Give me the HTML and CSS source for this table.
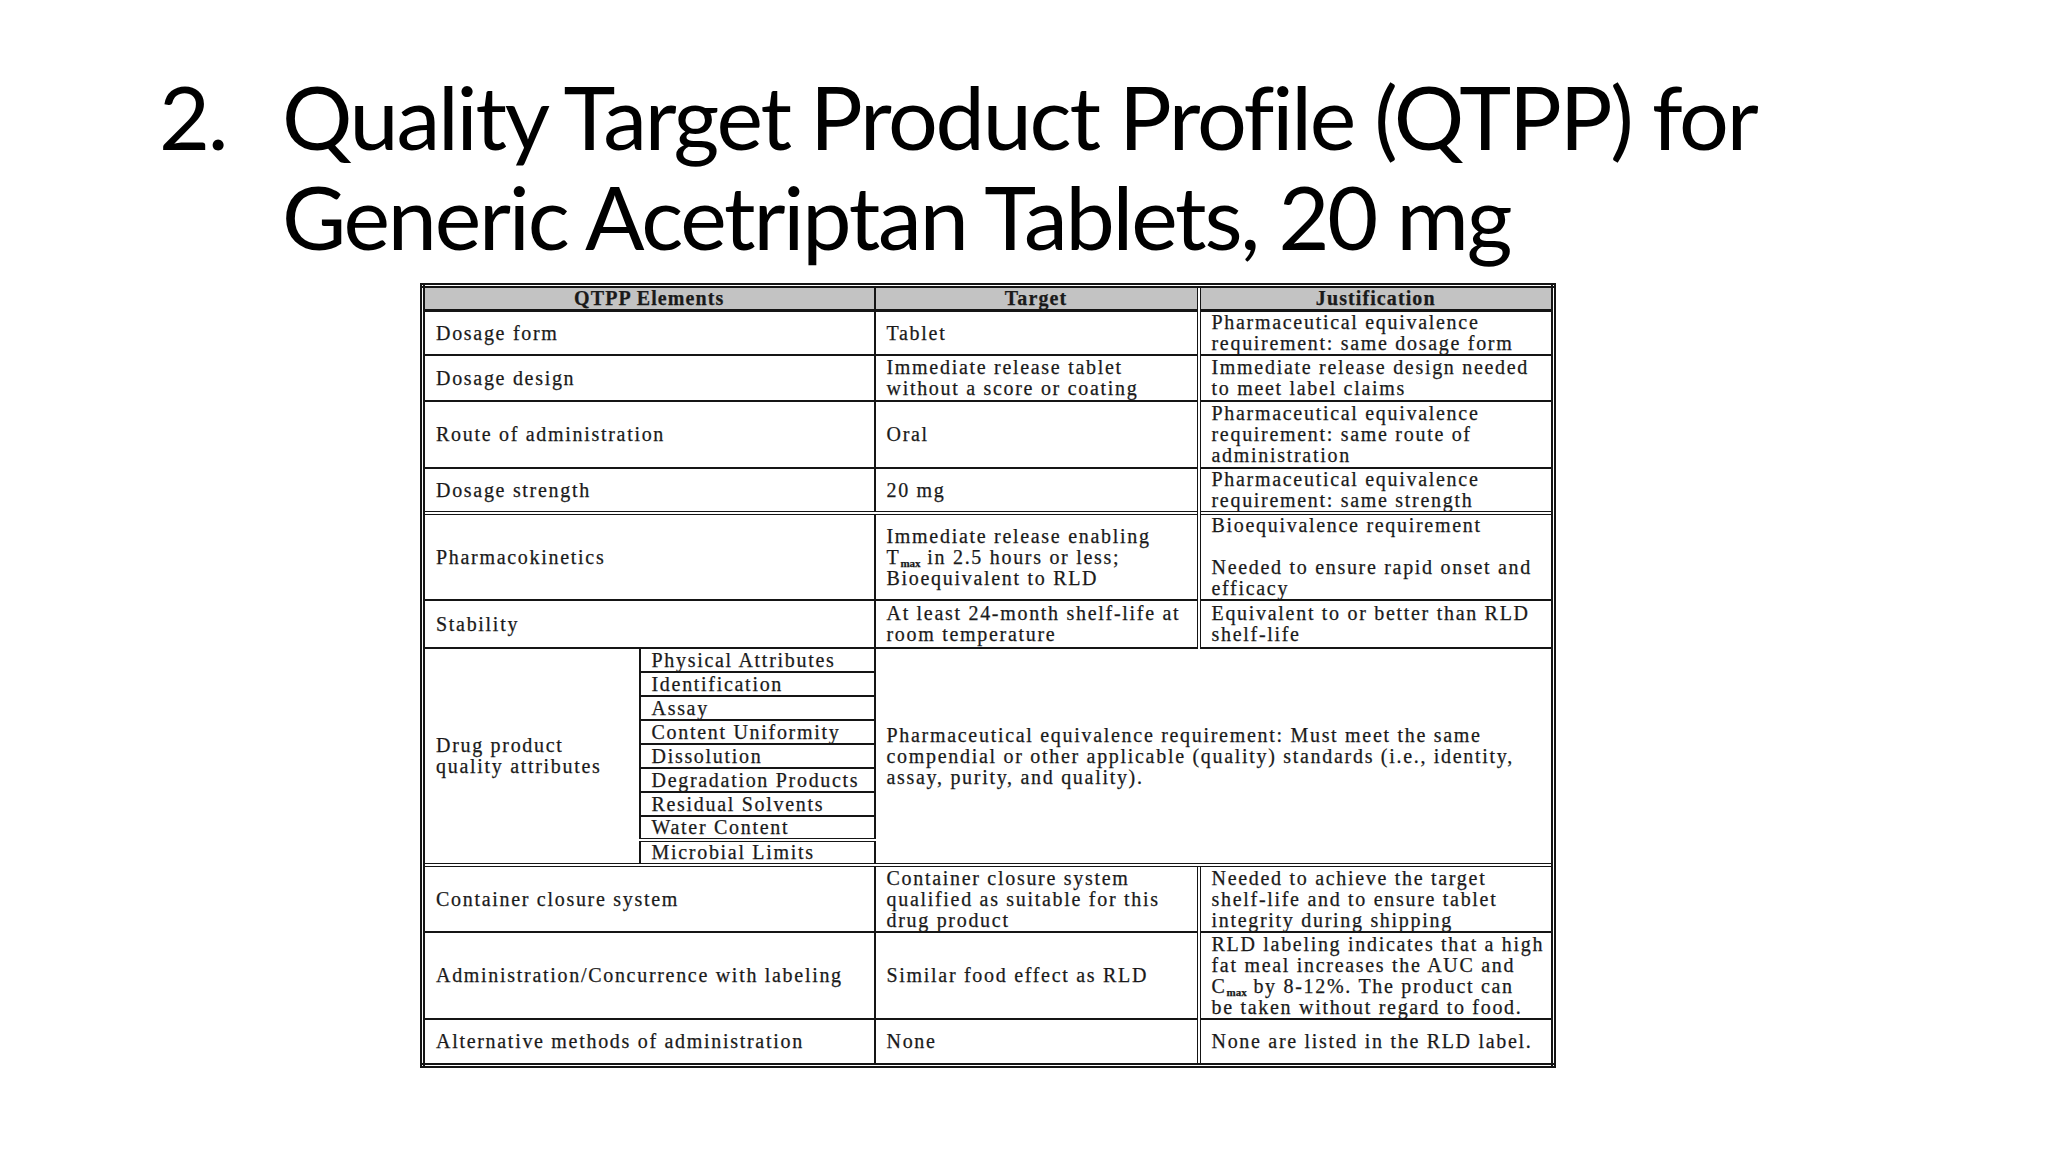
FILE: index.html
```html
<!DOCTYPE html>
<html lang="en">
<head>
<meta charset="utf-8">
<title>QTPP for Generic Acetriptan Tablets</title>
<link rel="stylesheet" href="styles.css">
</head>
<body>
<div class="slide">
  <h1 class="title"><span class="num">2.</span><span class="text">Quality Target Product Profile (QTPP) for<br>Generic Acetriptan Tablets, 20 mg</span></h1>
  <table class="qtpp">
    <colgroup><col class="c1"><col class="c2"><col class="c3"><col class="c4"></colgroup>
    <tr class="hdr">
      <th colspan="2">QTPP Elements</th><th>Target</th><th class="jc">Justification</th>
    </tr>
    <tr class="r-form">
      <td colspan="2">Dosage form</td><td>Tablet</td><td class="jc">Pharmaceutical equivalence<br>requirement: same dosage form</td>
    </tr>
    <tr class="r-design">
      <td colspan="2">Dosage design</td><td>Immediate release tablet<br>without a score or coating</td><td class="jc">Immediate release design needed<br>to meet label claims</td>
    </tr>
    <tr class="r-route">
      <td colspan="2">Route of administration</td><td>Oral</td><td class="jc">Pharmaceutical equivalence<br>requirement: same route of<br>administration</td>
    </tr>
    <tr class="r-strength">
      <td colspan="2">Dosage strength</td><td>20 mg</td><td class="jc">Pharmaceutical equivalence<br>requirement: same strength</td>
    </tr>
    <tr class="r-pk dbl">
      <td colspan="2">Pharmacokinetics</td><td>Immediate release enabling<br>T<sub>max</sub> in 2.5 hours or less;<br>Bioequivalent to RLD</td><td class="jc top">Bioequivalence requirement<br><br>Needed to ensure rapid onset and<br>efficacy</td>
    </tr>
    <tr class="r-stab">
      <td colspan="2">Stability</td><td>At least 24-month shelf-life at<br>room temperature</td><td class="jc">Equivalent to or better than RLD<br>shelf-life</td>
    </tr>
    <tr class="sub">
      <td rowspan="9" class="dp">Drug product<br>quality attributes</td><td>Physical Attributes</td><td colspan="2" rowspan="9">Pharmaceutical equivalence requirement: Must meet the same<br>compendial or other applicable (quality) standards (i.e., identity,<br>assay, purity, and quality).</td>
    </tr>
    <tr class="sub"><td>Identification</td></tr>
    <tr class="sub"><td>Assay</td></tr>
    <tr class="sub"><td>Content Uniformity</td></tr>
    <tr class="sub"><td>Dissolution</td></tr>
    <tr class="sub"><td>Degradation Products</td></tr>
    <tr class="sub"><td>Residual Solvents</td></tr>
    <tr class="sub"><td>Water Content</td></tr>
    <tr class="sub sub-last dbl-sub"><td>Microbial Limits</td></tr>
    <tr class="r-cont dbl">
      <td colspan="2">Container closure system</td><td>Container closure system<br>qualified as suitable for this<br>drug product</td><td class="jc">Needed to achieve the target<br>shelf-life and to ensure tablet<br>integrity during shipping</td>
    </tr>
    <tr class="r-admin">
      <td colspan="2">Administration/Concurrence with labeling</td><td>Similar food effect as RLD</td><td class="jc">RLD labeling indicates that a high<br>fat meal increases the AUC and<br>C<sub>max</sub> by 8-12%. The product can<br>be taken without regard to food.</td>
    </tr>
    <tr class="r-alt">
      <td colspan="2">Alternative methods of administration</td><td>None</td><td class="jc">None are listed in the RLD label.</td>
    </tr>
  </table>
</div>
</body>
</html>
```
FILE: styles.css
```css
html, body {
  margin: 0;
  padding: 0;
  background: #ffffff;
}

.slide {
  width: 2048px;
  height: 1152px;
  overflow: hidden;
  background: #ffffff;
  padding-top: 66px;
  box-sizing: border-box;
}

.title {
  display: flex;
  margin: 0 0 17px 159px;
  font-family: "Lato", "Open Sans", sans-serif;
  font-weight: 400;
  font-size: 88px;
  line-height: 100px;
  color: #000;
  letter-spacing: -2.2px;
}

.title .num {
  width: 123px;
  flex: none;
}

.qtpp {
  margin-left: 420px;
  width: 1131px;
  border-collapse: collapse;
  table-layout: fixed;
  border: 5px double #151515;
  font-family: "Liberation Serif", "Times New Roman", serif;
  font-size: 20px;
  line-height: 21px;
  letter-spacing: 1.7px;
  color: #1a1a1a;
  -webkit-text-stroke: 0.25px #1a1a1a;
}

.c1 { width: 217px; }
.c2 { width: 235px; }
.c3 { width: 324px; }
.c4 { width: 355px; }

.qtpp th,
.qtpp td {
  border: 2px solid #151515;
  padding: 0 0 0 11px;
  white-space: nowrap;
  vertical-align: middle;
  text-align: left;
  overflow: hidden;
}

.qtpp th {
  background: #c3c3c3;
  text-align: center;
  font-weight: bold;
  padding: 0;
  letter-spacing: 1.1px;
  border-bottom-width: 3px;
}

.qtpp .jc {
  border-left: 4px double #151515;
}

.qtpp .top {
  vertical-align: top;
}

.qtpp sub {
  font-size: 11px;
  line-height: 0;
  font-weight: bold;
  letter-spacing: 0;
  vertical-align: -3px;
}

.qtpp tr.dbl > td {
  border-top: 4px double #151515;
}

.qtpp tr.dbl-sub > td {
  border-top: 4px double #151515;
}

.hdr { height: 25px; }
.r-form { height: 44px; }
.r-design { height: 46px; }
.r-route { height: 67px; }
.r-strength { height: 44px; }
.r-pk { height: 87px; }
.r-stab { height: 48px; }
.sub { height: 24px; }
.sub-last { height: 23px; }
.r-cont { height: 67px; }
.r-admin { height: 87px; }
.r-alt { height: 46px; }

.qtpp .sub td {
  line-height: 21px;
}
```
